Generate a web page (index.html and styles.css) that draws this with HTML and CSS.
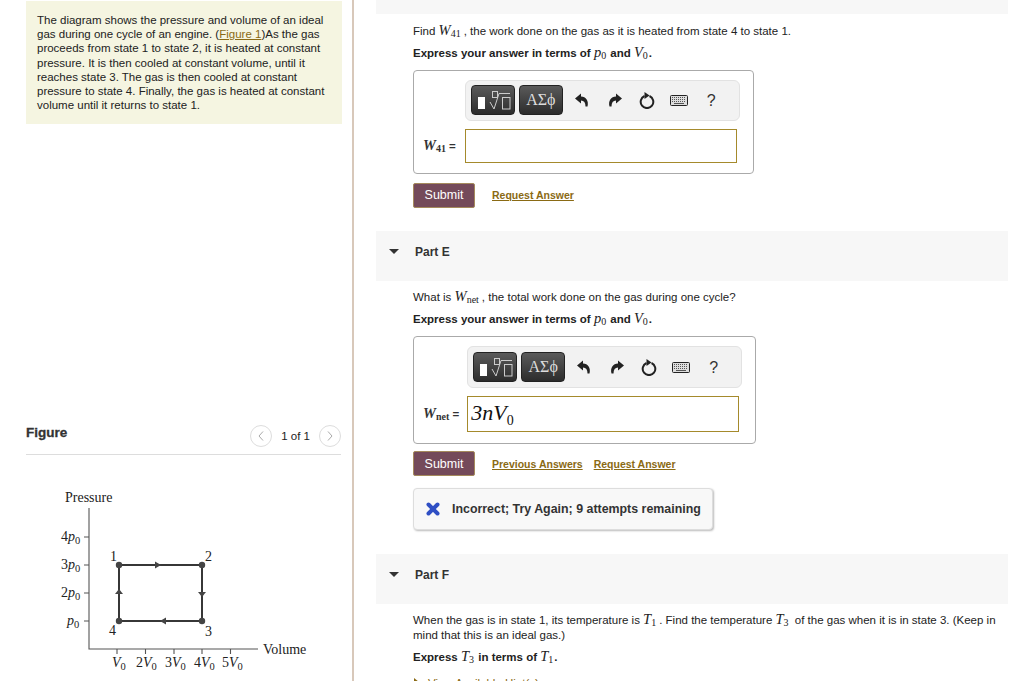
FILE: index.html
```html
<!DOCTYPE html>
<html lang="en">
<head>
    <meta charset="UTF-8">
    <meta name="viewport" content="width=device-width, initial-scale=1.0">
    <title>Ideal Gas Engine Cycle</title>
    <link rel="stylesheet" href="styles.css">
</head>
<body>

    <svg class="icon-defs" width="0" height="0">
        <symbol id="icon-undo" viewBox="0 0 14 14">
            <path d="M6 0.500 L0 5.500 L6 10.500 V7.500 C9 7.500 10.500 9.500 10.500 13.500 L12.500 13.500 C14 8 11 3.500 6 3.500 Z" fill="#222"/>
        </symbol>
        <symbol id="icon-reset" viewBox="0 0 18 18">
            <path d="M6.500 5 A6.300 6.300 0 1 0 11.500 5" fill="none" stroke="#222" stroke-width="2"/>
            <path d="M6.500 1 L11.500 4.500 L6.500 8 Z" fill="#222"/>
        </symbol>
        <symbol id="icon-keyboard" viewBox="0 0 18 11">
            <rect x="0.500" y="0.500" width="17" height="10" rx="1" fill="#ddd" stroke="#222"/>
            <path d="M2 2.500 H16 M2 4.500 H16 M2 6.500 H16" stroke="#555" stroke-width="1" stroke-dasharray="1 1"/>
            <path d="M4 8.500 H14" stroke="#555" stroke-width="1"/>
        </symbol>
        <symbol id="icon-template" viewBox="0 0 40 30">
            <rect x="5" y="12" width="7" height="12" fill="#fff"/>
            <rect x="19.500" y="6.500" width="5" height="6" fill="none" stroke="#ccc"/>
            <path d="M17 17 L21 24 L26 8.500 H37" fill="none" stroke="#ccc"/>
            <rect x="29.500" y="12.500" width="7.500" height="11.500" fill="none" stroke="#ccc"/>
        </symbol>
    </svg>

    <div class="layout">
        <div class="left-pane">
            <div class="intro">
                The diagram shows the pressure and volume of an ideal gas during one cycle of an engine. (<a href="#">Figure 1</a>)As the gas proceeds from state 1 to state 2, it is heated at constant pressure. It is then cooled at constant volume, until it reaches state 3. The gas is then cooled at constant pressure to state 4. Finally, the gas is heated at constant volume until it returns to state 1.
            </div>

            <div class="figure-head">
                <h2>Figure</h2>
                <div class="pager">
                    <span class="pager-btn"><svg width="8" height="12" viewBox="0 0 8 12"><path d="M6 1.500 L2 6 L6 10.500"/></svg></span>
                    <span>1 of 1</span>
                    <span class="pager-btn"><svg width="8" height="12" viewBox="0 0 8 12"><path d="M2 1.500 L6 6 L2 10.500"/></svg></span>
                </div>
            </div>

            <svg class="diagram" width="353" height="200" viewBox="0 481 353 200">
                <g class="axis">
                    <path d="M89 508 V649 H258"/>
                    <path d="M84 537 H89 M84 565 H89 M84 593 H89 M84 621 H89"/>
                    <path d="M117 649 V654 M145.500 649 V654 M174 649 V654 M202 649 V654 M230.500 649 V654"/>
                </g>
                <rect class="cycle" x="119" y="565" width="83" height="56"/>
                <g class="marks">
                    <circle cx="119" cy="565" r="3.200"/>
                    <circle cx="202" cy="565" r="3.200"/>
                    <circle cx="202" cy="621" r="3.200"/>
                    <circle cx="119" cy="621" r="3.200"/>
                    <path d="M155 561.500 L161 565 L155 568.500 Z"/>
                    <path d="M198 592 L206 592 L202 597 Z"/>
                    <path d="M166 617.500 L160 621 L166 624.500 Z"/>
                    <path d="M115 594 L123 594 L119 589 Z"/>
                </g>
                <text x="65" y="502">Pressure</text>
                <text x="263" y="654">Volume</text>
                <text x="61" y="541">4<tspan class="it">p</tspan><tspan class="sub" dy="3">0</tspan></text>
                <text x="61" y="569">3<tspan class="it">p</tspan><tspan class="sub" dy="3">0</tspan></text>
                <text x="61" y="597">2<tspan class="it">p</tspan><tspan class="sub" dy="3">0</tspan></text>
                <text x="67" y="625"><tspan class="it">p</tspan><tspan class="sub" dy="3">0</tspan></text>
                <text x="110" y="561">1</text>
                <text x="205" y="561">2</text>
                <text x="205" y="636">3</text>
                <text x="109" y="635">4</text>
                <text x="112" y="667"><tspan class="it">V</tspan><tspan class="sub" dy="3">0</tspan></text>
                <text x="136" y="667">2<tspan class="it">V</tspan><tspan class="sub" dy="3">0</tspan></text>
                <text x="165" y="667">3<tspan class="it">V</tspan><tspan class="sub" dy="3">0</tspan></text>
                <text x="194" y="667">4<tspan class="it">V</tspan><tspan class="sub" dy="3">0</tspan></text>
                <text x="222" y="667">5<tspan class="it">V</tspan><tspan class="sub" dy="3">0</tspan></text>
            </svg>
        </div>

        <div class="right-pane">
            <div class="part-bar part-bar-top"></div>

            <div class="part-body part-body-first">
                <p class="question">Find <i class="math">W<sub>41</sub></i>, the work done on the gas as it is heated from state 4 to state 1.</p>
                <p class="express">Express your answer in terms of <i class="math">p<sub>0</sub></i> and <i class="math">V<sub>0</sub></i>.</p>

                <div class="answer-box">
                    <div class="toolbar">
                        <span class="tool-btn tool-template"><svg width="40" height="30"><use href="#icon-template"/></svg></span>
                        <span class="tool-btn tool-greek">ΑΣϕ</span>
                        <svg class="tool-icon undo" width="14" height="14"><use href="#icon-undo"/></svg>
                        <svg class="tool-icon redo" width="14" height="14"><use href="#icon-undo"/></svg>
                        <svg class="tool-icon reset" width="18" height="18"><use href="#icon-reset"/></svg>
                        <svg class="tool-icon keys" width="18" height="11"><use href="#icon-keyboard"/></svg>
                        <span class="tool-help">?</span>
                    </div>
                    <label class="answer-label label-w41"><i class="math">W<sub>41</sub></i> =</label>
                    <div class="answer-input"></div>
                </div>

                <div class="actions">
                    <button class="submit">Submit</button>
                    <a href="#">Request Answer</a>
                </div>
            </div>

            <div class="part-bar">
                <span class="caret"></span>
                <span>Part E</span>
            </div>

            <div class="part-body">
                <p class="question">What is <i class="math">W<sub>net</sub></i>, the total work done on the gas during one cycle?</p>
                <p class="express">Express your answer in terms of <i class="math">p<sub>0</sub></i> and <i class="math">V<sub>0</sub></i>.</p>

                <div class="answer-box answer-box-tall">
                    <div class="toolbar toolbar-tall">
                        <span class="tool-btn tool-template"><svg width="40" height="30"><use href="#icon-template"/></svg></span>
                        <span class="tool-btn tool-greek">ΑΣϕ</span>
                        <svg class="tool-icon undo" width="14" height="14"><use href="#icon-undo"/></svg>
                        <svg class="tool-icon redo" width="14" height="14"><use href="#icon-undo"/></svg>
                        <svg class="tool-icon reset" width="18" height="18"><use href="#icon-reset"/></svg>
                        <svg class="tool-icon keys" width="18" height="11"><use href="#icon-keyboard"/></svg>
                        <span class="tool-help">?</span>
                    </div>
                    <label class="answer-label label-wnet"><i class="math">W<sub>net</sub></i> =</label>
                    <div class="answer-input entered"><i>3nV</i><sub>0</sub></div>
                </div>

                <div class="actions actions-tight">
                    <button class="submit">Submit</button>
                    <a href="#">Previous Answers</a>
                    <a href="#">Request Answer</a>
                </div>

                <div class="feedback">
                    <svg width="14" height="14" viewBox="0 0 14 14"><path d="M2.500 2.500 L11.500 11.500 M11.500 2.500 L2.500 11.500" stroke="#2f4fc4" stroke-width="4" stroke-linecap="round"/></svg>
                    <span>Incorrect; Try Again; 9 attempts remaining</span>
                </div>
            </div>

            <div class="part-bar">
                <span class="caret"></span>
                <span>Part F</span>
            </div>

            <div class="part-body">
                <p class="question">When the gas is in state 1, its temperature is <i class="math">T<sub>1</sub></i>. Find the temperature <i class="math">T<sub>3</sub></i> of the gas when it is in state 3. (Keep in mind that this is an ideal gas.)</p>
                <p class="express">Express <i class="math">T<sub>3</sub></i> in terms of <i class="math">T<sub>1</sub></i>.</p>
                <a class="hint" href="#">View Available Hint(s)</a>
            </div>
        </div>
    </div>

</body>
</html>
```

FILE: styles.css
```css
html, body {
    margin: 0;
    height: 681px;
    overflow: hidden;
    background: #fff;
}
body {
    font-family: "Liberation Sans", Arial, sans-serif;
    font-size: 11.500px;
    color: #222;
}
a {
    color: #8a6a14;
}
.icon-defs {
    display: block;
    height: 0;
}
.layout {
    display: flex;
    height: 681px;
}
.left-pane {
    width: 354px;
    flex: none;
    box-sizing: border-box;
    border-right: 2px solid #d8c8ba;
}
.intro {
    margin: 1px 0 0 26px;
    width: 316px;
    height: 123px;
    box-sizing: border-box;
    padding: 12px 6px 0 11px;
    background: #f5f5e1;
    line-height: 14.200px;
}
.figure-head {
    display: flex;
    justify-content: space-between;
    align-items: flex-start;
    margin: 301px 0 0 26px;
    width: 315px;
    height: 29px;
    border-bottom: 1px solid #ddd;
}
.figure-head h2 {
    margin: 0;
    font-size: 13.500px;
    line-height: 16px;
    color: #333;
    -webkit-text-stroke: 0.3px #333;
}
.pager {
    display: flex;
    align-items: center;
    gap: 9px;
}
.pager-btn {
    display: flex;
    align-items: center;
    justify-content: center;
    width: 22px;
    height: 22px;
    box-sizing: border-box;
    border: 1px solid #ddd;
    border-radius: 50%;
}
.pager-btn path {
    fill: none;
    stroke: #aaa;
}
.diagram {
    display: block;
    margin-top: 26px;
}
.diagram text {
    font-family: "Liberation Serif", serif;
    font-size: 14px;
    fill: #222;
}
.diagram .it {
    font-style: italic;
}
.diagram .sub {
    font-size: 10.500px;
}
.axis path {
    fill: none;
    stroke: #555;
    stroke-width: 1.100;
}
.cycle {
    fill: none;
    stroke: #222;
    stroke-width: 1.800;
}
.marks {
    fill: #444;
}

.right-pane {
    flex: 1;
    min-width: 0;
    padding: 0 16px 0 22px;
}
.part-bar {
    display: flex;
    align-items: flex-start;
    height: 50px;
    box-sizing: border-box;
    padding: 14px 0 0 13px;
    gap: 16px;
    background: #f7f7f7;
    font-size: 12px;
    font-weight: bold;
    color: #333;
}
.part-bar-top {
    height: 14px;
    padding: 0;
}
.caret {
    margin-top: 4px;
    border-left: 5px solid transparent;
    border-right: 5px solid transparent;
    border-top: 5px solid #333;
}
.part-body {
    padding: 9px 8px 0 37px;
}
.part-body-first {
    padding-top: 10px;
    padding-bottom: 23px;
}
.question {
    margin: 0 0 8px;
    line-height: 14.500px;
}
.part-body-first .question {
    margin-bottom: 7px;
}
.express {
    margin: 0 0 9px;
    line-height: 15px;
    font-weight: bold;
}
.math {
    font-family: "Liberation Serif", serif;
    font-size: 14.500px;
    font-weight: normal;
    line-height: 0;
    padding-right: 3px;
}
.express .math {
    padding-right: 1px;
}
.math sub {
    font-size: 10px;
    font-style: normal;
    line-height: 0;
    vertical-align: -2px;
}
.answer-box {
    display: grid;
    grid-template-columns: auto 275px;
    width: max-content;
    box-sizing: border-box;
    padding: 9px 13px 10px 9px;
    row-gap: 8px;
    border: 1px solid #aaa;
    border-radius: 4px;
}
.answer-box-tall {
    padding-bottom: 11px;
}
.toolbar {
    grid-column: 2;
    display: flex;
    align-items: center;
    height: 41px;
    box-sizing: border-box;
    padding-left: 5px;
    background: #f2f2f2;
    border: 1px solid #e2e2e2;
    border-radius: 6px;
}
.toolbar-tall {
    height: 42px;
}
.tool-btn {
    display: flex;
    align-items: center;
    justify-content: center;
    width: 44px;
    height: 30px;
    box-sizing: border-box;
    margin-right: 4px;
    border-radius: 4px;
    border: 1px solid #222;
    background: linear-gradient(#5a5a5a, #2c2c2c);
    color: #ddd;
}
.tool-greek {
    font-family: "Liberation Serif", serif;
    font-size: 16px;
}
.tool-icon {
    flex: none;
}
.undo {
    margin-left: 8px;
}
.redo {
    margin-left: 19px;
    transform: scaleX(-1);
}
.reset {
    margin-left: 16px;
}
.keys {
    margin-left: 14px;
}
.tool-help {
    margin-left: 19px;
    padding-top: 2px;
    font-size: 16px;
    color: #333;
}
.answer-label {
    grid-column: 1;
    align-self: center;
    white-space: nowrap;
    font-weight: bold;
    color: #333;
}
.answer-label .math {
    font-weight: bold;
    font-style: italic;
    padding-right: 0;
}
.label-w41 {
    padding-right: 9px;
}
.label-wnet {
    padding-right: 8px;
}
.answer-input {
    grid-column: 2;
    width: 272px;
    height: 34px;
    box-sizing: border-box;
    border: 1px solid #a58a2c;
    background: #fff;
}
.entered {
    height: 36px;
    padding: 1px 0 0 3px;
    font-family: "Liberation Serif", serif;
    font-size: 22px;
    line-height: 30px;
    color: #111;
}
.entered sub {
    font-size: 14px;
    line-height: 0;
}
.actions {
    display: flex;
    align-items: center;
    gap: 11px;
    margin-top: 9px;
}
.actions-tight {
    margin-top: 7px;
}
.actions a {
    font-weight: bold;
    font-size: 10.500px;
}
.actions .submit + a {
    margin-left: 6px;
}
.submit {
    width: 62px;
    height: 25px;
    padding: 0;
    font: 12.500px "Liberation Sans", Arial, sans-serif;
    color: #fff;
    background: #744a5a;
    border: 1px solid #a58a5c;
    border-radius: 2px;
}
.feedback {
    display: flex;
    align-items: center;
    gap: 12px;
    margin: 12px 0 24px;
    width: 300px;
    height: 42px;
    box-sizing: border-box;
    padding-left: 12px;
    background: #f8f8f8;
    border: 1px solid #ddd;
    border-radius: 4px;
    box-shadow: 1px 1px 2px #bbb;
    font-size: 12.400px;
    font-weight: bold;
    color: #333;
}
.hint {
    display: block;
    margin-top: 12px;
    padding-left: 15px;
    font-size: 11.500px;
    position: relative;
}
.hint::before {
    content: "";
    position: absolute;
    left: 1px;
    top: 1px;
    border-top: 4px solid transparent;
    border-bottom: 4px solid transparent;
    border-left: 5px solid #8a6a14;
}
```
